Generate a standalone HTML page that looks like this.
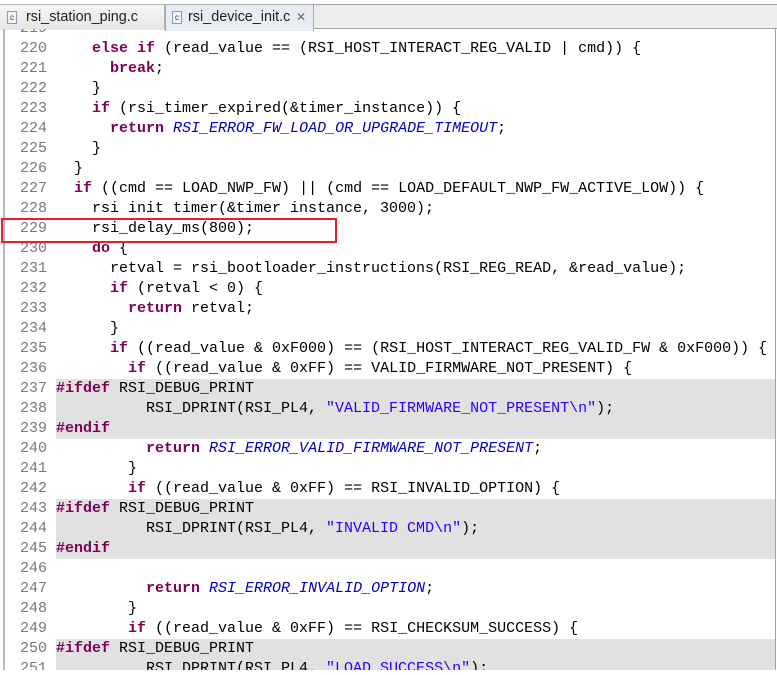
<!DOCTYPE html>
<html><head><meta charset="utf-8"><style>
*{margin:0;padding:0;box-sizing:border-box}
body{width:777px;height:675px;background:#fff;overflow:hidden;position:relative;font-family:"Liberation Mono",monospace}
.tabbar{position:absolute;left:0;top:4px;width:777px;height:25px;background:#ececec;border-top:1px solid #a0a0a0;border-bottom:1px solid #a0a0a0}
.tab{position:absolute;top:-1px;height:26px;font-family:"Liberation Sans",sans-serif;font-size:14.4px;color:#222;padding-top:4px}
.t1{left:0;width:165px;background:linear-gradient(#f5f5f5,#e6e6e6);border-right:1px solid #b5b5b5;border-top:1px solid #b5b5b5}
.t2{left:165px;width:149px;background:#e8edf3;border:1px solid #a8a8a8;border-bottom:none;height:27px}
.ic{position:absolute;top:6px;width:10px;height:13px;border:1px solid #8a9bb5;background:#eef3fa;font-size:8px;line-height:11px;text-align:center;color:#345}
.ed{position:absolute;left:3px;top:29px;width:773px;height:641px;border-left:2px solid #b8b8c8;border-right:1px solid #a0a0a0;overflow:hidden}
.ln{position:absolute;left:-5px;height:20px;width:780px;font-size:15px;line-height:20px;white-space:pre;color:#000}
.ln .n{position:absolute;left:0;width:47px;text-align:right;color:#787878}
.ln .c{position:absolute;left:56px}
.g{position:absolute;left:51px;height:20px;width:730px;background:#e1e1e1}
.k{color:#7f0055;font-weight:bold}
.i{color:#0000c0;font-style:italic}
.s{color:#2a00ff}
.red{position:absolute;left:1px;top:218px;width:336px;height:25px;border:2px solid #e8202a}
</style></head><body>
<div class="tabbar">
<div class="tab t1"><span class="ic" style="left:7px">c</span><span style="position:absolute;left:26px">rsi_station_ping.c</span></div>
<div class="tab t2"><span class="ic" style="left:6px">c</span><span style="position:absolute;left:22px">rsi_device_init.c</span><span style="position:absolute;left:130px;font-size:12px;color:#666;top:5px">✕</span></div>
</div>
<div class="ed">
<div class="g" style="top:350px;height:60px"></div>
<div class="g" style="top:470px;height:60px"></div>
<div class="g" style="top:610px;height:40px"></div>
<div class="ln" style="top:-10px"><span class="n">219</span></div>
<div class="ln" style="top:10px"><span class="n">220</span><span class="c">    <span class="k">else if</span> (read_value == (RSI_HOST_INTERACT_REG_VALID | cmd)) {</span></div>
<div class="ln" style="top:30px"><span class="n">221</span><span class="c">      <span class="k">break</span>;</span></div>
<div class="ln" style="top:50px"><span class="n">222</span><span class="c">    }</span></div>
<div class="ln" style="top:70px"><span class="n">223</span><span class="c">    <span class="k">if</span> (rsi_timer_expired(&amp;timer_instance)) {</span></div>
<div class="ln" style="top:90px"><span class="n">224</span><span class="c">      <span class="k">return</span> <span class="i">RSI_ERROR_FW_LOAD_OR_UPGRADE_TIMEOUT</span>;</span></div>
<div class="ln" style="top:110px"><span class="n">225</span><span class="c">    }</span></div>
<div class="ln" style="top:130px"><span class="n">226</span><span class="c">  }</span></div>
<div class="ln" style="top:150px"><span class="n">227</span><span class="c">  <span class="k">if</span> ((cmd == LOAD_NWP_FW) || (cmd == LOAD_DEFAULT_NWP_FW_ACTIVE_LOW)) {</span></div>
<div class="ln" style="top:170px"><span class="n">228</span><span class="c">    rsi init timer(&amp;timer instance, 3000);</span></div>
<div class="ln" style="top:190px"><span class="n">229</span><span class="c">    rsi_delay_ms(800);</span></div>
<div class="ln" style="top:210px"><span class="n">230</span><span class="c">    <span class="k">do</span> {</span></div>
<div class="ln" style="top:230px"><span class="n">231</span><span class="c">      retval = rsi_bootloader_instructions(RSI_REG_READ, &amp;read_value);</span></div>
<div class="ln" style="top:250px"><span class="n">232</span><span class="c">      <span class="k">if</span> (retval &lt; 0) {</span></div>
<div class="ln" style="top:270px"><span class="n">233</span><span class="c">        <span class="k">return</span> retval;</span></div>
<div class="ln" style="top:290px"><span class="n">234</span><span class="c">      }</span></div>
<div class="ln" style="top:310px"><span class="n">235</span><span class="c">      <span class="k">if</span> ((read_value &amp; 0xF000) == (RSI_HOST_INTERACT_REG_VALID_FW &amp; 0xF000)) {</span></div>
<div class="ln" style="top:330px"><span class="n">236</span><span class="c">        <span class="k">if</span> ((read_value &amp; 0xFF) == VALID_FIRMWARE_NOT_PRESENT) {</span></div>
<div class="ln" style="top:350px"><span class="n">237</span><span class="c"><span class="k">#ifdef</span> RSI_DEBUG_PRINT</span></div>
<div class="ln" style="top:370px"><span class="n">238</span><span class="c">          RSI_DPRINT(RSI_PL4, <span class="s">"VALID_FIRMWARE_NOT_PRESENT\n"</span>);</span></div>
<div class="ln" style="top:390px"><span class="n">239</span><span class="c"><span class="k">#endif</span></span></div>
<div class="ln" style="top:410px"><span class="n">240</span><span class="c">          <span class="k">return</span> <span class="i">RSI_ERROR_VALID_FIRMWARE_NOT_PRESENT</span>;</span></div>
<div class="ln" style="top:430px"><span class="n">241</span><span class="c">        }</span></div>
<div class="ln" style="top:450px"><span class="n">242</span><span class="c">        <span class="k">if</span> ((read_value &amp; 0xFF) == RSI_INVALID_OPTION) {</span></div>
<div class="ln" style="top:470px"><span class="n">243</span><span class="c"><span class="k">#ifdef</span> RSI_DEBUG_PRINT</span></div>
<div class="ln" style="top:490px"><span class="n">244</span><span class="c">          RSI_DPRINT(RSI_PL4, <span class="s">"INVALID CMD\n"</span>);</span></div>
<div class="ln" style="top:510px"><span class="n">245</span><span class="c"><span class="k">#endif</span></span></div>
<div class="ln" style="top:530px"><span class="n">246</span></div>
<div class="ln" style="top:550px"><span class="n">247</span><span class="c">          <span class="k">return</span> <span class="i">RSI_ERROR_INVALID_OPTION</span>;</span></div>
<div class="ln" style="top:570px"><span class="n">248</span><span class="c">        }</span></div>
<div class="ln" style="top:590px"><span class="n">249</span><span class="c">        <span class="k">if</span> ((read_value &amp; 0xFF) == RSI_CHECKSUM_SUCCESS) {</span></div>
<div class="ln" style="top:610px"><span class="n">250</span><span class="c"><span class="k">#ifdef</span> RSI_DEBUG_PRINT</span></div>
<div class="ln" style="top:630px"><span class="n">251</span><span class="c">          RSI_DPRINT(RSI_PL4, <span class="s">"LOAD SUCCESS\n"</span>);</span></div>
</div>
<div class="red"></div>
</body></html>
